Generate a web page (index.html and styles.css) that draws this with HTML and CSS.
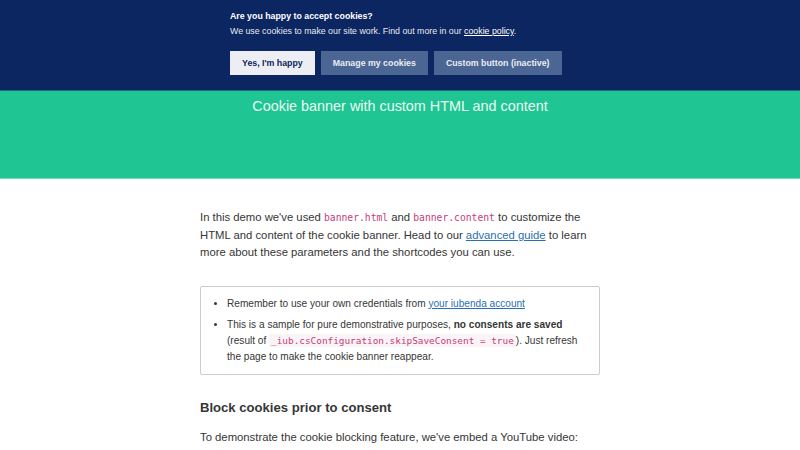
FILE: index.html
```html
<!DOCTYPE html>
<html>

<head>
    <title>Cookie banner with custom HTML and content</title>
    <link rel="stylesheet" href="styles.css">
</head>

<body>
    <div class="cookie-banner">
        <div class="cookie-inner">
            <p class="cookie-title">Are you happy to accept cookies?</p>
            <p class="cookie-text">We use cookies to make our site work. Find out more in our <a href="#">cookie policy</a>.</p>
            <div class="cookie-buttons">
                <button class="btn btn-accept">Yes, I'm happy</button>
                <button class="btn btn-alt">Manage my cookies</button>
                <button class="btn btn-alt">Custom button (inactive)</button>
            </div>
        </div>
    </div>

    <header class="hero">
        <h1>Cookie banner with custom HTML and content</h1>
    </header>

    <main class="content">
        <p>In this demo we've used <code>banner.html</code> and <code>banner.content</code> to customize the HTML and content of the cookie banner. Head to our <a href="#">advanced guide</a> to learn more about these parameters and the shortcodes you can use.</p>

        <div class="notes">
            <ul>
                <li>Remember to use your own credentials from <a href="#">your iubenda account</a></li>
                <li>This is a sample for pure demonstrative purposes, <strong>no consents are saved</strong> (result of <code>_iub.csConfiguration.skipSaveConsent = true</code>). Just refresh the page to make the cookie banner reappear.</li>
            </ul>
        </div>

        <h2>Block cookies prior to consent</h2>
        <p>To demonstrate the cookie blocking feature, we've embed a YouTube video:</p>
    </main>
</body>

</html>
```

FILE: styles.css
```css
body {
    font-family: "Liberation Sans", Arial, sans-serif;
    margin: 0;
    padding: 0;
    color: #363636;
    background-color: #fff;
    overflow: hidden;
}

a {
    color: #2a6fb0;
}

code {
    font-family: "DejaVu Sans Mono", monospace;
    color: #c33d7a;
    font-size: 9.7px;
}

.cookie-banner {
    background-color: #0c2661;
    color: #fff;
    height: 90px;
    border-bottom: 1px solid #1d6a86;
}

.cookie-inner {
    margin-left: 230px;
    padding-top: 11px;
}

.cookie-title {
    margin: 0;
    font-size: 8.8px;
    line-height: 11px;
    font-weight: bold;
}

.cookie-text {
    margin: 4px 0 0;
    font-size: 8.8px;
    line-height: 11px;
    color: #e6e9f0;
}

.cookie-text a {
    color: #fff;
}

.cookie-buttons {
    display: flex;
    gap: 6px;
    margin-top: 14px;
}

.btn {
    font-family: "Liberation Sans", Arial, sans-serif;
    font-size: 8.8px;
    font-weight: bold;
    height: 24px;
    padding: 0 12px;
    border: none;
    border-radius: 0;
    white-space: nowrap;
    cursor: pointer;
}

.btn-accept {
    background-color: #eceef3;
    color: #0c2661;
}

.btn-alt {
    background-color: #4c6694;
    color: #e8ecf4;
}

.hero {
    background-color: #1fc592;
    height: 87px;
    border-bottom: 1px solid #6fdcbb;
    text-align: center;
}

.hero h1 {
    margin: 0;
    padding-top: 6px;
    font-size: 14.4px;
    line-height: 18px;
    font-weight: normal;
    color: #eafaf4;
}

.content {
    width: 400px;
    margin: 0 auto;
    padding-top: 30px;
    font-size: 11.3px;
    line-height: 17.5px;
}

.content p {
    margin: 0 0 24px;
}

.notes {
    border: 1px solid #ccc;
    border-radius: 2px;
    padding: 9px 16px 9px 26px;
    font-size: 10.1px;
    line-height: 16px;
}

.notes ul {
    margin: 0;
    padding: 0;
}

.notes li + li {
    margin-top: 5px;
}

.notes code {
    background-color: #fbf4f7;
    padding: 1px 2px;
    font-size: 9.4px;
}

.content h2 {
    font-size: 13.1px;
    line-height: 15px;
    margin: 25px 0 14px;
}
```
